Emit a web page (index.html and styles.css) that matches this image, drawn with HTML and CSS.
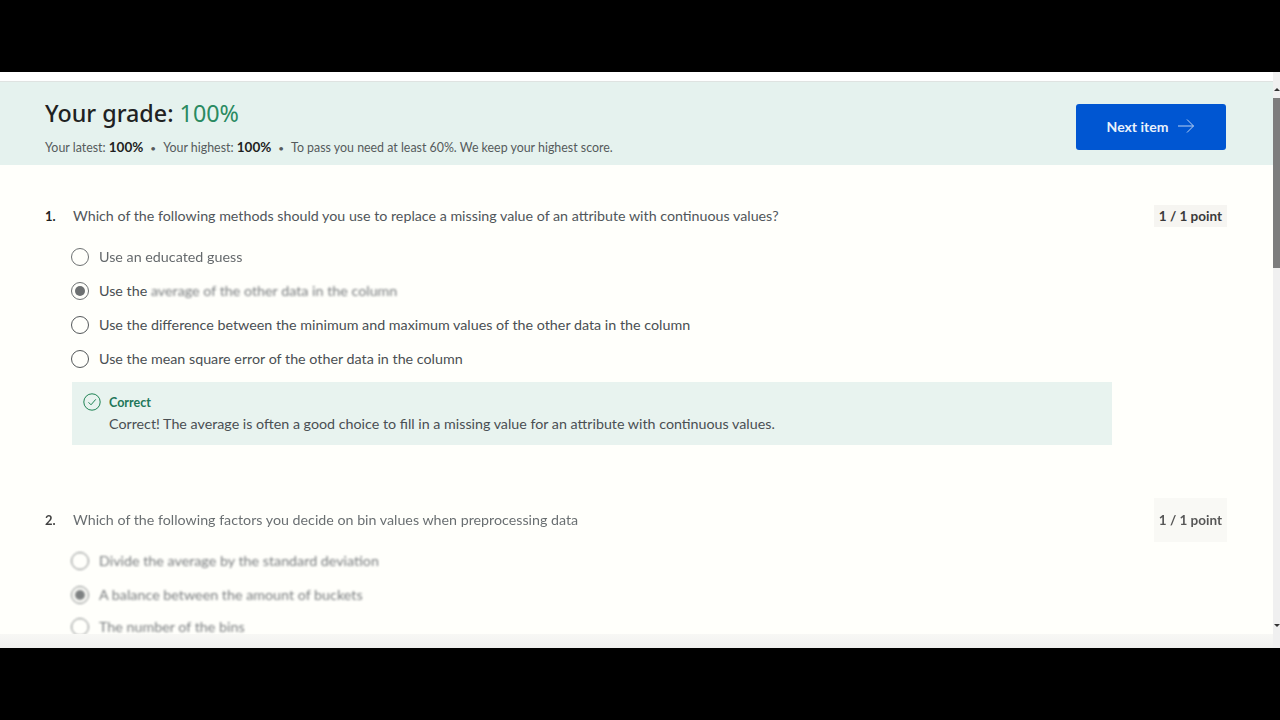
FILE: index.html
```html
<!DOCTYPE html>
<html lang="en">
<head>
<meta charset="utf-8">
<title>Quiz grade</title>
<link rel="stylesheet" href="styles.css">
</head>
<body>
<div class="page">
  <div class="content">
    <header class="grade">
      <div class="grade-text">
        <h1 class="grade-title">Your grade: <span class="grade-value">100%</span></h1>
        <p class="grade-meta">Your latest: <b>100%</b><span class="dot">•</span>Your highest: <b>100%</b><span class="dot">•</span>To pass you need at least 60%. We keep your highest score.</p>
      </div>
      <button class="next">Next item
        <svg class="next-arrow" width="18" height="16" viewBox="0 0 18 16" fill="none" stroke="currentColor" stroke-width="1"><path d="M1 8h15.500M10 1.500L16.500 8 10 14.500"/></svg>
      </button>
    </header>

    <main class="questions">
      <section class="question">
        <div class="q-head">
          <span class="q-num">1.</span>
          <span class="q-text">Which of the following methods should you use to replace a missing value of an attribute with continuous values?</span>
          <span class="q-points">1 / 1 point</span>
        </div>
        <div class="options">
          <div class="option smear-light"><span class="radio"></span><span>Use an educated guess</span></div>
          <div class="option"><span class="radio radio-on smear-light"></span><span class="smear-mix">Use the <span class="smear-strong">average of the other data in the column</span></span></div>
          <div class="option"><span class="radio"></span><span>Use the difference between the minimum and maximum values of the other data in the column</span></div>
          <div class="option"><span class="radio"></span><span>Use the mean square error of the other data in the column</span></div>
        </div>
        <div class="feedback">
          <svg class="check" width="18" height="18" viewBox="0 0 18 18" fill="none" stroke="#1f8354" stroke-width="1"><circle cx="9" cy="9" r="8.200"/><path d="M5.500 9.300l2.500 2.500 4.800-5.500"/></svg>
          <div>
            <div class="fb-title">Correct</div>
            <div class="fb-text">Correct! The average is often a good choice to fill in a missing value for an attribute with continuous values.</div>
          </div>
        </div>
      </section>

      <section class="question second">
        <div class="q-head">
          <span class="q-num smear-light">2.</span>
          <span class="q-text smear-light">Which of the following factors you decide on bin values when preprocessing data</span>
          <span class="q-points q-points-smeared smear-light">1 / 1 point</span>
        </div>
        <div class="options smear-strong">
          <div class="option"><span class="radio"></span><span>Divide the average by the standard deviation</span></div>
          <div class="option"><span class="radio radio-on"></span><span>A balance between the amount of buckets</span></div>
          <div class="option option-cut"><span class="radio"></span><span>The number of the bins</span></div>
        </div>
      </section>
    </main>

    <div class="footer-strip"></div>
  </div>

  <div class="scrollbar">
    <span class="scroll-up"></span>
    <span class="scroll-thumb"></span>
    <span class="scroll-down"></span>
  </div>
</div>
</body>
</html>
```

FILE: styles.css
```css
* { box-sizing: border-box; }
html, body { height: 100%; }
body {
  margin: 0;
  padding: 72px 0;
  background: #000;
  color: #3a3f42;
  font-family: "Lato", "Noto Sans", sans-serif;
  overflow: hidden;
}
.page {
  height: 576px;
  display: flex;
  background: #fffffb;
  overflow: hidden;
}
.content {
  flex: 1;
  min-width: 0;
  display: flex;
  flex-direction: column;
  padding-top: 10px;
  background: linear-gradient(#fff, #fff 9px, #dfe3e1 9px, #dfe3e1 10px, transparent 10px);
}
.grade {
  height: 83px;
  flex: none;
  display: flex;
  justify-content: space-between;
  padding: 17px 47px 0 45px;
  background: #e5f2ee;
}
.grade-title {
  margin: 0;
  font-family: "Noto Sans", sans-serif;
  font-size: 23.300px;
  line-height: 28px;
  font-weight: 500;
  color: #1f2222;
}
.grade-value { color: #2a8a61; font-weight: 400; }
.grade-meta {
  margin: 12px 0 0;
  font-size: 12.400px;
  line-height: 16px;
  color: #555b5c;
}
.grade-meta b { color: #1f1f1f; font-weight: 700; font-size: 13.500px; }
.dot { margin: 0 7px; font-size: 10px; }
.next {
  width: 150px;
  height: 46px;
  margin-top: 5px;
  padding: 0 0 2px;
  display: flex;
  align-items: center;
  justify-content: center;
  gap: 9px;
  border: 0;
  border-radius: 3px;
  background: #0056d2;
  color: #e9f1fb;
  font: 700 14px "Lato", sans-serif;
}
.next-arrow { color: #b9d0f2; }
.questions { flex: 1; min-height: 0; overflow: hidden; padding: 0 46px 0 45px; }
.question { padding-top: 41px; }
.question.second { padding-top: 65px; }
.q-head {
  display: flex;
  align-items: center;
  height: 20px;
  font-size: 14.250px;
}
.q-num { width: 28px; font-weight: 700; color: #1f1f1f; font-size: 13px; }
.q-text { flex: 1; color: #50565a; margin-bottom: 2px; }
.q-points {
  padding: 3px 5px;
  background: #f6f5f1;
  font-size: 13.500px;
  font-weight: 700;
  color: #3a3a3a;
}
.q-points-smeared { padding: 14px 5px; margin: -14px 0; background: #f8f8f5; }
.options { margin: 14px 0 0 26px; display: flex; flex-direction: column; }
.option {
  height: 34px;
  display: flex;
  align-items: center;
  gap: 10px;
  font-size: 14.300px;
  color: #4a4f53;
}
.option > span + span { margin-bottom: 2px; }
.radio {
  width: 18px;
  height: 18px;
  flex: none;
  border: 1.500px solid #54585a;
  border-radius: 50%;
  position: relative;
}
.radio-on::after {
  content: "";
  position: absolute;
  inset: 3px;
  border-radius: 50%;
  background: #54585a;
}
.option-cut { margin-top: -2px; }
.smear-light { filter: blur(0.700px); opacity: 0.85; }
.smear-strong { filter: blur(1.200px); opacity: 0.75; }
.feedback {
  margin: 6px 0 0 27px;
  width: 1040px;
  height: 63px;
  display: flex;
  gap: 8px;
  padding: 11px 11px 0;
  background: #e8f3ef;
}
.check { flex: none; }
.fb-title { font-size: 12.500px; font-weight: 700; color: #22775a; line-height: 18px; margin-top: 1px; }
.fb-text { font-size: 14.270px; color: #4a4f53; line-height: 22px; margin-top: 1px; }
.footer-strip { height: 14px; flex: none; background: linear-gradient(#f8f8f5, #f1f1ef); }
.scrollbar {
  width: 7px;
  flex: none;
  display: flex;
  flex-direction: column;
  align-items: center;
  padding-top: 16px;
  background: #f0f0f0;
}
.scroll-up, .scroll-down {
  flex: none;
  width: 0;
  height: 0;
  border-left: 3px solid transparent;
  border-right: 3px solid transparent;
}
.scroll-up { border-bottom: 3px solid #333; }
.scroll-thumb { flex: none; width: 7px; height: 170px; margin-top: 7px; background: #7d7d7d; }
.scroll-down { margin-top: auto; margin-bottom: 21px; border-top: 3px solid #333; }
```
